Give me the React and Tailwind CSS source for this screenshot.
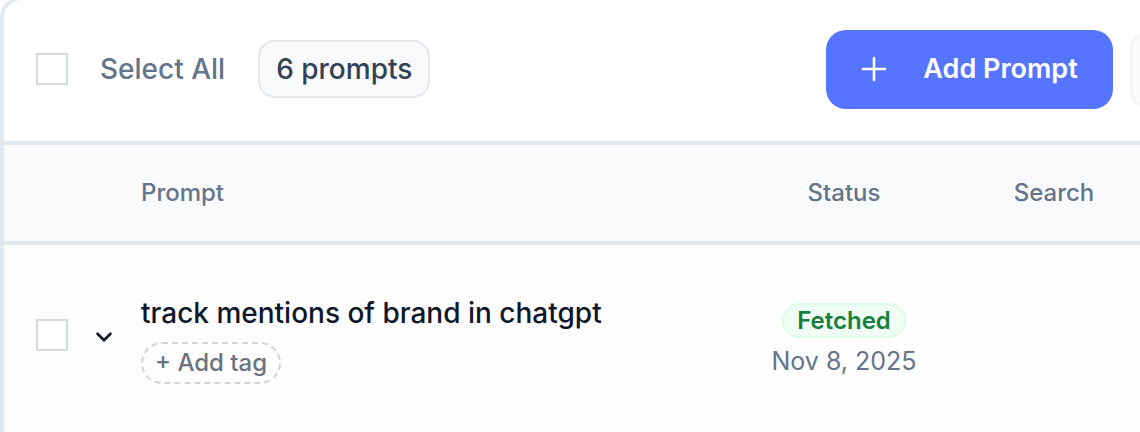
import { Plus, ChevronDown } from 'lucide-react'

function Checkbox({ className = '' }) {
  return <div className={`h-[32px] w-[32px] shrink-0 border-2 border-[#d4d9e0] bg-white ${className}`} />
}

export default function App() {
  return (
    <div className="h-[432px] w-[1140px] overflow-hidden bg-white" style={{ fontFamily: 'Inter, "Noto Sans", sans-serif' }}>
      <div className="-mt-[4px] w-[1400px] rounded-tl-[22px] border-l-4 border-t-4 border-[#e2e8f0] bg-white">

        {/* TOOLBAR */}
        <div className="flex h-[141px] items-center pb-[3px] pl-[32px]">
          <Checkbox />
          <span className="ml-[32px] text-[28px] font-medium text-[#64748b]">Select All</span>
          <span className="ml-[33px] flex h-[58px] items-center rounded-[17px] border-2 border-[#e5e7eb] bg-[#f8fafc] px-[16px] text-[28px] font-medium text-[#334155]">
            6 prompts
          </span>
          <div className="ml-[396px] flex items-center gap-[17px]">
            <button className="flex h-[79px] w-[287px] items-center rounded-[20px] bg-[#5574ff] pl-[29px] text-[27px] font-semibold text-white">
              <Plus size={38} strokeWidth={1.6} />
              <span className="ml-[30px]">Add Prompt</span>
            </button>
            <button className="h-[79px] w-[180px] rounded-[20px] border-2 border-[#f1f3f6] bg-[#fbfbfc]" />
          </div>
        </div>

        {/* TABLE HEADER */}
        <div className="flex h-[104px] items-center border-y-4 border-[#e2e8f0] bg-[#f8fafc] text-[24px] font-medium text-[#64748b]">
          <div className="w-[137px] shrink-0" />
          <div className="w-[603px] shrink-0">Prompt</div>
          <div className="w-[200px] shrink-0 text-center">Status</div>
          <div className="w-[220px] shrink-0 text-center">Search</div>
        </div>

        {/* ROW */}
        <div className="flex h-[200px] items-start bg-[#fdfdfd] pt-[50px]">
          <div className="flex w-[137px] shrink-0 items-center pl-[32px] pt-[24px]">
            <Checkbox />
            <ChevronDown size={26} strokeWidth={2.4} className="ml-[23px] mt-[4px] text-[#111827]" />
          </div>
          <div className="w-[603px] shrink-0">
            <p className="text-[28px] font-medium leading-[36px] text-[#0f172a]">track mentions of brand in chatgpt</p>
            <span className="mt-[11px] inline-flex h-[42px] items-center rounded-full border-2 border-dashed border-[#d1d5db] px-[12px] text-[24px] font-medium text-[#6b7280]">
              + Add tag
            </span>
          </div>
          <div className="flex w-[200px] shrink-0 flex-col items-center pt-[8px]">
            <span className="flex h-[35px] items-center rounded-full border-2 border-[#dcfce7] bg-[#f0fdf4] px-[13px] text-[24px] font-semibold text-[#15803d]">
              Fetched
            </span>
            <span className="mt-[5px] text-[25px] leading-[36px] text-[#64748b]">Nov 8, 2025</span>
          </div>
          <div className="w-[220px] shrink-0" />
        </div>

      </div>
    </div>
  )
}
